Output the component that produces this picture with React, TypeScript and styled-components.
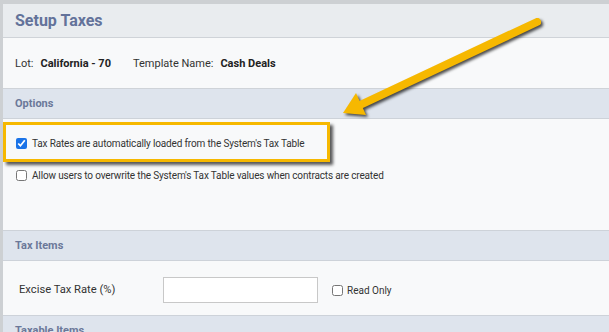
import React from 'react';
import styled, { createGlobalStyle } from 'styled-components';

const GlobalStyle = createGlobalStyle`
  html, body {
    margin: 0;
    padding: 0;
    background: #cdd0d3;
  }
  body {
    font-family: Roboto, "Liberation Sans", Arial, sans-serif;
  }
`;

const Page = styled.div`
  position: relative;
  width: 609px;
  height: 332px;
  overflow: hidden;
  padding: 4px 0 0 3px;
  box-sizing: border-box;
`;

const Panel = styled.div`
  background: #f8f9fa;
  display: flex;
  flex-direction: column;
`;

const TitleBar = styled.div`
  height: 33px;
  display: flex;
  align-items: center;
  padding-left: 12px;
  background: #e9ecef;
  border-bottom: 1px solid #cfd3d8;
`;

const Title = styled.h1`
  margin: 0;
  font-size: 16px;
  font-weight: 700;
  color: #63729a;
`;

const InfoRow = styled.div`
  height: 51px;
  display: flex;
  align-items: center;
  gap: 22px;
  padding: 1px 0 0 12px;
  box-sizing: border-box;
  font-size: 11px;
  color: #333;
  border-bottom: 1px solid #cfd3d8;
`;

const InfoItem = styled.span`
  display: flex;
  gap: 7px;
`;

const InfoValue = styled.b`
  font-weight: 700;
  color: #222;
`;

const SectionHeader = styled.div`
  height: 29px;
  display: flex;
  align-items: center;
  padding-left: 12px;
  background: #dee4ed;
  border-bottom: 1px solid #cdd2d9;
  font-size: 11px;
  font-weight: 700;
  color: #6b7899;
`;

const SectionBody = styled.div<{ $height: number }>`
  height: ${(p) => p.$height}px;
  box-sizing: border-box;
  border-bottom: 1px solid #cdd2d9;
`;

const OptionsBody = styled(SectionBody)`
  display: flex;
  flex-direction: column;
  align-items: flex-start;
  padding-top: 3px;
  gap: 8px;
`;

const CheckRow = styled.label<{ $highlight?: boolean }>`
  display: flex;
  align-items: center;
  gap: 5px;
  box-sizing: border-box;
  white-space: nowrap;
  font-size: 10px;
  letter-spacing: -0.15px;
  color: #333;
  padding: ${(p) => (p.$highlight ? '13px 0 10px 10px' : '0 0 0 13px')};
  border: ${(p) => (p.$highlight ? '3px solid #f6b800' : 'none')};
  box-shadow: ${(p) => (p.$highlight ? '3px 3px 3px rgba(0,0,0,0.65)' : 'none')};
  width: ${(p) => (p.$highlight ? '327px' : 'auto')};
`;

const Check = styled.input.attrs({ type: 'checkbox' })`
  margin: 0;
  width: 11px;
  height: 11px;
  accent-color: #1a73e8;
`;

const TaxBody = styled(SectionBody)`
  display: flex;
  align-items: center;
  padding: 3px 0 0 16px;
`;

const FieldLabel = styled.span`
  width: 144px;
  font-size: 11.2px;
  color: #333;
`;

const TextInput = styled.input`
  width: 155px;
  height: 26px;
  box-sizing: border-box;
  border: 1px solid #c8c8c8;
  background: #fff;
  margin: 0 14px 0 0;
  padding: 0 6px;
`;

const SmallCheck = styled.label`
  display: flex;
  align-items: center;
  gap: 4px;
  font-size: 10px;
  color: #333;
  padding-top: 2px;
`;

const Arrow = styled.svg`
  position: absolute;
  left: 0;
  top: 0;
  pointer-events: none;
  filter: drop-shadow(2px 2px 1.5px rgba(0, 0, 0, 0.7));
`;

export default function App() {
  return (
    <>
      <GlobalStyle />
      <Page>
        <Panel>
          <TitleBar>
            <Title>Setup Taxes</Title>
          </TitleBar>
          <InfoRow>
            <InfoItem>
              Lot: <InfoValue>California - 70</InfoValue>
            </InfoItem>
            <InfoItem>
              Template Name: <InfoValue>Cash Deals</InfoValue>
            </InfoItem>
          </InfoRow>
          <SectionHeader>Options</SectionHeader>
          <OptionsBody $height={112}>
            <CheckRow $highlight>
              <Check defaultChecked />
              Tax Rates are automatically loaded from the System's Tax Table
            </CheckRow>
            <CheckRow>
              <Check />
              Allow users to overwrite the System's Tax Table values when contracts are created
            </CheckRow>
          </OptionsBody>
          <SectionHeader>Tax Items</SectionHeader>
          <TaxBody $height={55}>
            <FieldLabel>Excise Tax Rate (%)</FieldLabel>
            <TextInput />
            <SmallCheck>
              <Check />
              Read Only
            </SmallCheck>
          </TaxBody>
          <SectionHeader>Taxable Items</SectionHeader>
        </Panel>
        <Arrow width="609" height="332" viewBox="0 0 609 332">
          <line x1="537" y1="22" x2="358" y2="106" stroke="#f6b800" strokeWidth="8" strokeLinecap="round" />
          <polygon points="343,113 366,115 356,93" fill="#f6b800" />
        </Arrow>
      </Page>
    </>
  );
}
